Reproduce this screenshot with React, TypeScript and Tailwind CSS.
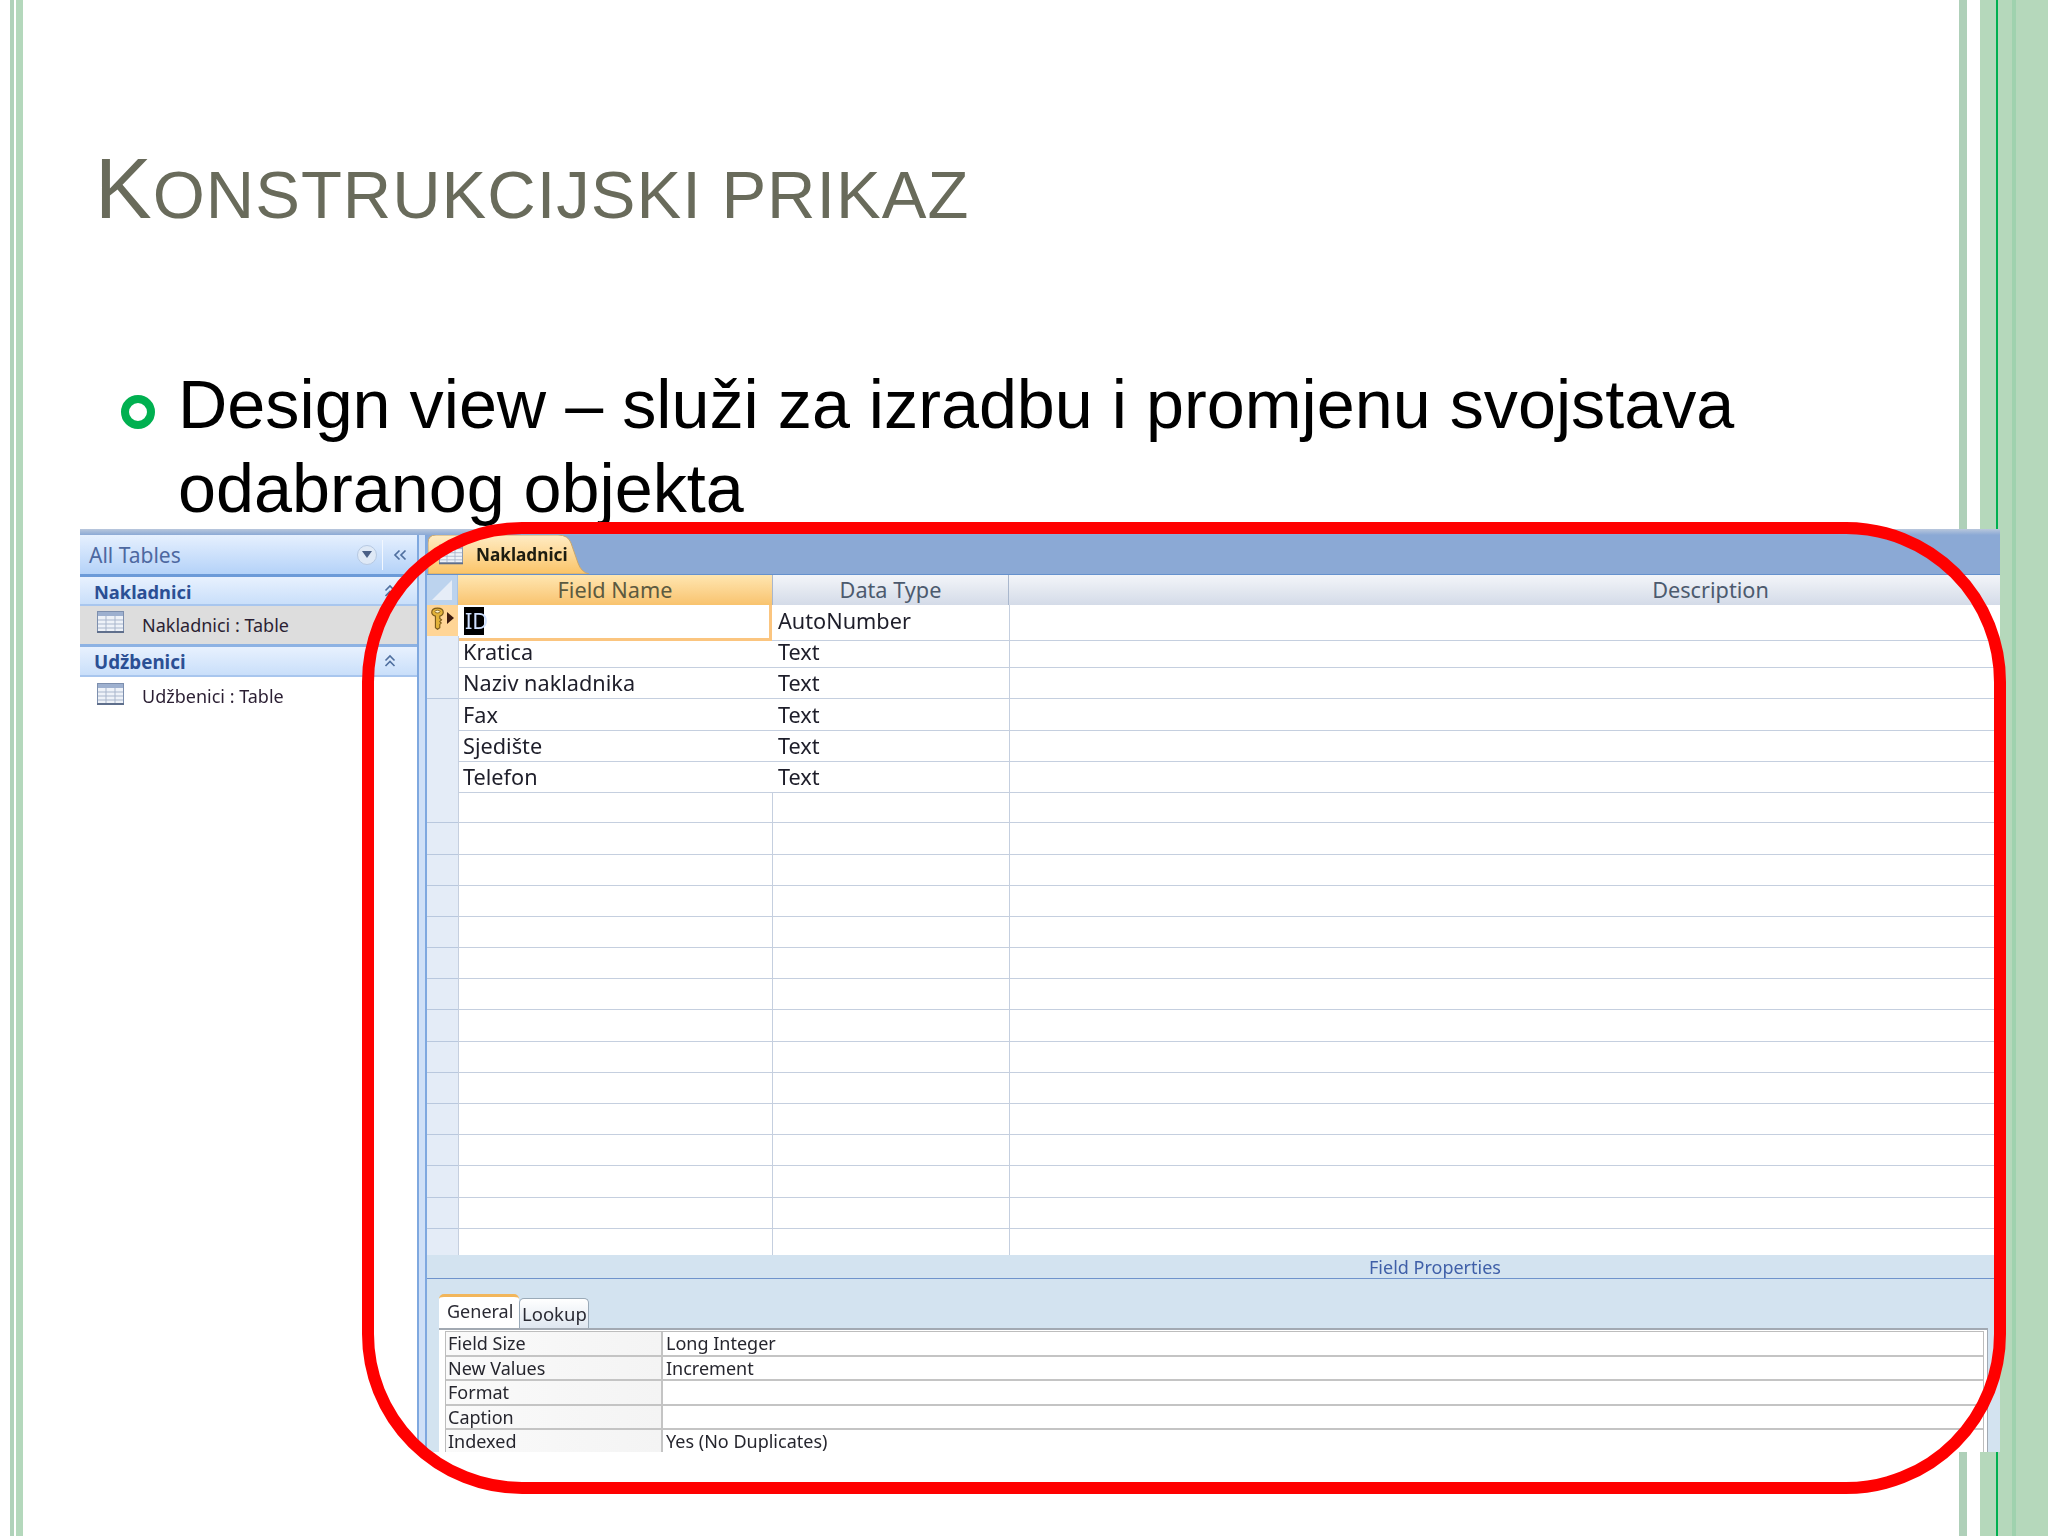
const ui = { fontFamily: '"Noto Sans", "Open Sans", sans-serif' };

const fields = [
  ["ID", "AutoNumber"],
  ["Kratica", "Text"],
  ["Naziv nakladnika", "Text"],
  ["Fax", "Text"],
  ["Sjedište", "Text"],
  ["Telefon", "Text"],
];
const emptyRows = Array.from({ length: 15 }, (_, i) => i);

const props = [
  ["Field Size", "Long Integer"],
  ["New Values", "Increment"],
  ["Format", ""],
  ["Caption", ""],
  ["Indexed", "Yes (No Duplicates)"],
];

function TableIcon({ className }: { className?: string }) {
  return (
    <svg viewBox="0 0 27 22" className={className}>
      <rect x="0.5" y="0.5" width="26" height="20" fill="#eef2f8" stroke="#7d8fae" />
      <rect x="1" y="1" width="25" height="4" fill="#9db0cf" />
      <path d="M1 9h25M1 13h25M1 17h25M9 5v15M18 5v15" stroke="#a9b6cc" strokeWidth="1" />
      <rect x="0" y="20" width="27" height="2" fill="#5f6f8c" />
    </svg>
  );
}

function DoubleUp({ className }: { className?: string }) {
  return (
    <svg viewBox="0 0 12 14" fill="none" stroke="#4f6f9f" strokeWidth="1.6" className={className}>
      <path d="M1.5 6.5 6 2l4.5 4.5M1.5 12 6 7.5l4.5 4.5" />
    </svg>
  );
}

function KeyIcon() {
  return (
    <svg viewBox="0 0 12 20" className="w-[15px] h-[23px] shrink-0">
      <path
        d="M6 1c2.800 0 5 1.400 5 3.600 0 1.700-1.200 2.800-3 3.300V10l1.500 1.200L8 12.600l1.200 1.300L8 15.200V18l-2 1.400L4.200 18V7.900C2.200 7.400 1 6.300 1 4.600 1 2.400 3.200 1 6 1Z"
        fill="#e2b23a"
        stroke="#7a5a1c"
        strokeWidth="1"
      />
      <ellipse cx="6" cy="4" rx="2.200" ry="1.200" fill="#fff4c9" stroke="#7a5a1c" strokeWidth="0.700" />
    </svg>
  );
}

function NavPane() {
  return (
    <div className="w-[337px] shrink-0 bg-white">
      <div className="h-[42px] flex items-center bg-gradient-to-b from-[#e6f0fe] to-[#b4d2f8] border-b-[3px] border-[#6b9ad8]">
        <span className="ml-[9px] pt-[3px] text-[21px] text-[#4d68a0] w-[268px]">All Tables</span>
        <span className="w-[20px] h-[20px] rounded-full bg-[#dfe9f6] border border-[#b7c9e2] flex items-center justify-center">
          <span className="w-0 h-0 border-l-[5px] border-r-[5px] border-t-[7px] border-l-transparent border-r-transparent border-t-[#4a5f86]" />
        </span>
        <span className="ml-[5px] w-px h-[30px] bg-[#f2f7fe]" />
        <svg viewBox="0 0 14 12" fill="none" stroke="#4f6f9f" strokeWidth="1.700" className="ml-[10px] w-[14px] h-[12px]">
          <path d="M6.500 1.500 2 6l4.500 4.500M12.500 1.500 8 6l4.500 4.500" />
        </svg>
      </div>
      <div className="h-[29px] flex items-center justify-between bg-gradient-to-b from-[#e8f1fe] to-[#c9dffa] border-b-2 border-[#a8c6ee] pl-[14px] pr-[21px]">
        <span className="pt-[3px] text-[18.300px] font-bold text-[#2b4f94]">Nakladnici</span>
        <DoubleUp className="w-[12px] h-[14px]" />
      </div>
      <div className="h-[41px] flex items-center bg-[#dddddd] border-b-[3px] border-[#8db2e3] pl-[17px]">
        <TableIcon className="w-[27px] h-[22px] -mt-[6px]" />
        <span className="ml-[18px] text-[18px] text-[#2b1f33]">Nakladnici : Table</span>
      </div>
      <div className="h-[30px] flex items-center justify-between bg-gradient-to-b from-[#e8f1fe] to-[#c9dffa] border-b-2 border-[#a8c6ee] pl-[14px] pr-[21px]">
        <span className="pt-[2px] text-[18.800px] font-bold text-[#2b4f94]">Udžbenici</span>
        <DoubleUp className="w-[12px] h-[14px]" />
      </div>
      <div className="h-[39px] flex items-center pl-[17px]">
        <TableIcon className="w-[27px] h-[22px] -mt-[6px]" />
        <span className="ml-[18px] text-[18px] text-[#2b1f33]">Udžbenici : Table</span>
      </div>
    </div>
  );
}

function TabStrip() {
  return (
    <div className="h-[40px] shrink-0 bg-[#8ba9d5] border-b border-[#6591cd] flex">
      <div className="relative w-[161px] h-[39px] ml-px">
        <svg viewBox="0 0 161 39" className="absolute inset-0 w-full h-full">
          <defs>
            <linearGradient id="tabFill" x1="0" y1="0" x2="0" y2="1">
              <stop offset="0" stopColor="#ffecc4" />
              <stop offset="1" stopColor="#fbc468" />
            </linearGradient>
          </defs>
          <path d="M0 39V8Q0 0 8 0H130Q140 0 143 8L150 28Q153 37 161 39Z" fill="url(#tabFill)" stroke="#c9a66b" strokeWidth="1" />
        </svg>
        <div className="relative flex items-center h-full pl-[11px]">
          <TableIcon className="w-[24px] h-[21px]" />
          <span className="ml-[13px] text-[17.200px] font-bold text-[#1c1c10]">Nakladnici</span>
        </div>
      </div>
    </div>
  );
}

function FieldGrid() {
  return (
    <div className="h-[680px] shrink-0 overflow-hidden text-[21.700px] bg-white">
      <div className="grid grid-cols-[31px_314px_237px_1fr] h-[30px]">
        <div className="bg-[#bcd3ee] border-r border-[#a9c2e2] flex items-end justify-end p-[5px]">
          <svg viewBox="0 0 20 20" className="w-[20px] h-[20px]">
            <polygon points="20,0 20,20 0,20" fill="#e6edf7" />
          </svg>
        </div>
        <div className="bg-gradient-to-b from-[#ffe6b0] to-[#f8c36e] text-center text-[#5c5a40] leading-[30px]">Field Name</div>
        <div className="bg-gradient-to-b from-[#f3f5f9] to-[#d4dbe8] border-l border-r border-[#a9b7cd] text-center text-[#4c5a6e] leading-[30px]">Data Type</div>
        <div className="bg-gradient-to-b from-[#f3f5f9] to-[#d4dbe8] text-center text-[#4c5a6e] leading-[30px] pl-[412px]">Description</div>
      </div>
      {fields.map(([name, type], i) => (
        <div key={name} className="grid grid-cols-[31px_314px_237px_1fr] h-[31.200px]">
          <div className={i === 0 ? "bg-[#ffd596] flex items-start gap-[2px] pl-[3px] pt-[2px]" : "bg-[#e4ecf7] border-b border-[#b9c8de]"}>
            {i === 0 && (
              <>
                <KeyIcon />
                <span className="mt-[5px] w-0 h-0 border-t-[6px] border-b-[6px] border-l-[7px] border-t-transparent border-b-transparent border-l-[#3c1a10]" />
              </>
            )}
          </div>
          <div className={i === 0 ? "border-b-[3px] border-r-[3px] border-[#fbc57f] pl-[6px]" : "border-l border-b border-[#c5cfdf] pl-[4px] leading-[31px] text-[#1e1e2a]"}>
            {i === 0 ? <span className="inline-block bg-black text-[#cfe0ff] h-[28px] leading-[28px] w-[20px] pl-px">ID</span> : name}
          </div>
          <div className="border-b border-[#c5cfdf] pl-[6px] leading-[31px] text-[#1e1e2a]">{type}</div>
          <div className="border-l border-b border-[#c5cfdf]" />
        </div>
      ))}
      {emptyRows.map((r) => (
        <div key={r} className="grid grid-cols-[31px_314px_237px_1fr] h-[31.200px]">
          <div className="bg-[#e4ecf7] border-b border-[#b9c8de]" />
          <div className="border-l border-b border-[#c5cfdf]" />
          <div className="border-l border-b border-[#c5cfdf]" />
          <div className="border-l border-b border-[#c5cfdf]" />
        </div>
      ))}
    </div>
  );
}

function FieldProperties() {
  return (
    <div className="flex-1 bg-[#d3e3f0] overflow-hidden">
      <div className="h-[24px] border-b border-[#6f93cc] text-[18px] leading-[24px] text-[#3f5fa8] pl-[942px]">Field Properties</div>
      <div className="flex items-end h-[49px] pl-[12px] text-[#2a2a33]">
        <div className="w-[80px] h-[34px] bg-white border-t-[3px] border-[#f2b65b] rounded-t-[5px] pl-[8px] text-[18px] leading-[28px]">General</div>
        <div className="w-[70px] h-[30px] bg-gradient-to-b from-white to-[#dfe7f0] border border-b-0 border-[#9aaab8] rounded-t-[5px] pl-[2px] text-[18.500px] leading-[29px]">Lookup</div>
      </div>
      <div className="ml-[12px] w-[1549px] bg-white pl-[6px] pr-[3px] pt-px border-t-2 border-r border-[#a2a9b2]">
        <div className="border border-b-0 border-[#bdbdbd] text-[18px] text-[#26262e]">
          {props.map(([label, value]) => (
            <div key={label} className="flex h-[24.600px] border-b-2 border-[#c4c4c4]">
              <div className="w-[217px] bg-gradient-to-r from-[#fafafa] to-[#f4f4f4] border-r-2 border-[#c4c4c4] pl-[2px] leading-[22px]">{label}</div>
              <div className="flex-1 pl-[3px] leading-[22px]">{value}</div>
            </div>
          ))}
        </div>
      </div>
    </div>
  );
}

function AccessWindow() {
  return (
    <div className="relative z-10 ml-[56px] w-[1920px] h-[923px] flex flex-col overflow-hidden blur-[0.4px]" style={ui}>
      <div className="h-[6px] shrink-0 bg-gradient-to-b from-[#b9c7dc] to-[#8ba9d5]" />
      <div className="flex flex-1 min-h-0">
        <NavPane />
        <div className="w-[10px] shrink-0 bg-[#cfe0f7] border-l-[2px] border-r-[2px] border-[#7fa8df]" />
        <div className="flex-1 flex flex-col min-w-0">
          <TabStrip />
          <FieldGrid />
          <FieldProperties />
        </div>
      </div>
    </div>
  );
}

export default function App() {
  return (
    <div className="relative w-[2048px] h-[1536px] bg-white overflow-hidden flex" style={{ fontFamily: '"Liberation Sans", Arial, sans-serif' }}>
      <div className="w-[24px] shrink-0 flex pl-[10px]">
        <div className="w-[4px] bg-[#b0d2ba]" />
        <div className="w-[2px]" />
        <div className="w-[7px] bg-[#b4d8bc]" />
      </div>

      <div className="flex-1 min-w-0">
        <h1 className="pt-[139px] pl-[71px] h-[239px] text-[67px] leading-[100px] tracking-[1px] text-[#696b5b] font-normal whitespace-nowrap">
          <span className="text-[85px]">K</span>ONSTRUKCIJSKI PRIKAZ
        </h1>
        <div className="mt-[123px] h-[167px] flex items-start pl-[97px] text-black">
          <span className="mt-[33px] w-[34px] h-[34px] shrink-0 rounded-full border-[8px] border-[#00b050]" />
          <p className="ml-[23px] text-[68.300px] leading-[84px] whitespace-nowrap">
            Design view – služi za izradbu i promjenu svojstava
            <br />
            odabranog objekta
          </p>
        </div>
        <AccessWindow />
      </div>

      <div className="w-[89px] shrink-0 flex">
        <div className="w-[8px] bg-[#afd0b9]" />
        <div className="w-[13px]" />
        <div className="w-[16px] bg-[#b5d8bb]" />
        <div className="w-[2px] bg-[#00b050]" />
        <div className="w-[14px] bg-[#b5d8bb]" />
        <div className="w-[4px] bg-[#9fd2ae]" />
        <div className="flex-1 bg-[#b5d8bb]" />
      </div>

      <div className="absolute z-20 left-[362px] top-[522px] w-[1644px] h-[972px] border-[12px] border-[#ff0000] rounded-[160px]" />
    </div>
  );
}
